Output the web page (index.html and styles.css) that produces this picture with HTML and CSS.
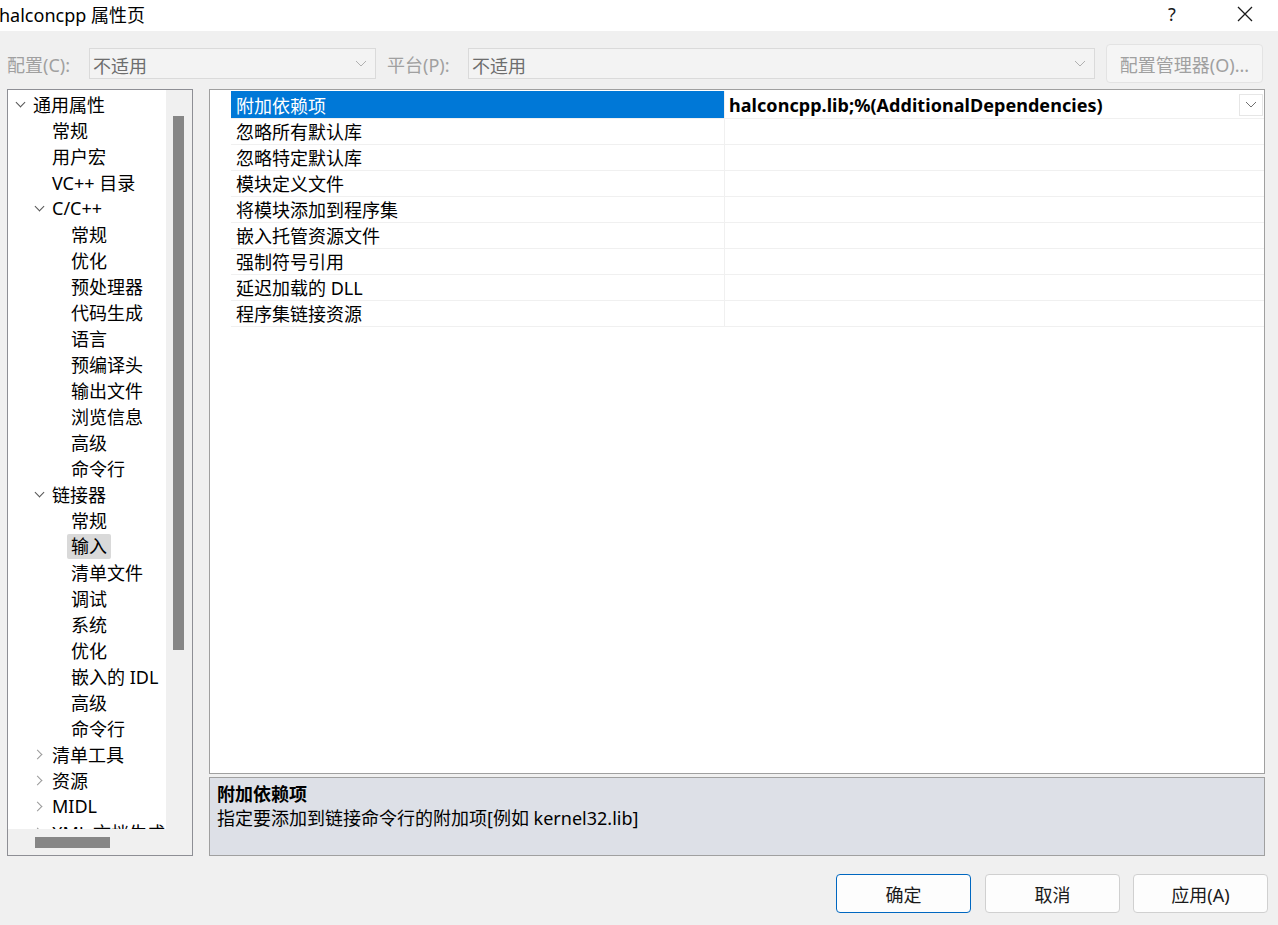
FILE: index.html
```html
<!DOCTYPE html>
<html lang="zh-CN">
<head>
  <meta charset="UTF-8" />
  <title>halconcpp 属性页</title>
  <link rel="stylesheet" href="styles.css">
</head>
<body>
  <div class="dialog">
    <div class="titlebar">
      <span class="title">halconcpp 属性页</span>
      <span class="help">?</span>
      <span class="close">
        <svg width="16" height="16" viewBox="0 0 16 16"><path d="M1 1 L15 15 M15 1 L1 15" stroke="#1a1a1a" stroke-width="1.3" fill="none"/></svg>
      </span>
    </div>

    <div class="config-row">
      <label class="config-label">配置(C):</label>
      <div class="combo combo-config">
        <span>不适用</span>
        <svg class="combo-arrow" width="12" height="7" viewBox="0 0 12 7"><path d="M1 1 L6 6 L11 1" stroke="#b0b0b0" fill="none"/></svg>
      </div>
      <label class="config-label platform-label">平台(P):</label>
      <div class="combo combo-platform">
        <span>不适用</span>
        <svg class="combo-arrow" width="12" height="7" viewBox="0 0 12 7"><path d="M1 1 L6 6 L11 1" stroke="#b0b0b0" fill="none"/></svg>
      </div>
      <button class="manager-button" disabled>配置管理器(O)...</button>
    </div>

    <div class="main">
      <div class="tree-panel">
        <div class="tree">
          <div class="node lvl0"><span class="twisty open"></span>通用属性</div>
          <div class="node lvl1"><span class="twisty"></span>常规</div>
          <div class="node lvl1"><span class="twisty"></span>用户宏</div>
          <div class="node lvl1"><span class="twisty"></span>VC++ 目录</div>
          <div class="node lvl1"><span class="twisty open"></span>C/C++</div>
          <div class="node lvl2"><span class="twisty"></span>常规</div>
          <div class="node lvl2"><span class="twisty"></span>优化</div>
          <div class="node lvl2"><span class="twisty"></span>预处理器</div>
          <div class="node lvl2"><span class="twisty"></span>代码生成</div>
          <div class="node lvl2"><span class="twisty"></span>语言</div>
          <div class="node lvl2"><span class="twisty"></span>预编译头</div>
          <div class="node lvl2"><span class="twisty"></span>输出文件</div>
          <div class="node lvl2"><span class="twisty"></span>浏览信息</div>
          <div class="node lvl2"><span class="twisty"></span>高级</div>
          <div class="node lvl2"><span class="twisty"></span>命令行</div>
          <div class="node lvl1"><span class="twisty open"></span>链接器</div>
          <div class="node lvl2"><span class="twisty"></span>常规</div>
          <div class="node lvl2"><span class="twisty"></span><span class="selected">输入</span></div>
          <div class="node lvl2"><span class="twisty"></span>清单文件</div>
          <div class="node lvl2"><span class="twisty"></span>调试</div>
          <div class="node lvl2"><span class="twisty"></span>系统</div>
          <div class="node lvl2"><span class="twisty"></span>优化</div>
          <div class="node lvl2"><span class="twisty"></span>嵌入的 IDL</div>
          <div class="node lvl2"><span class="twisty"></span>高级</div>
          <div class="node lvl2"><span class="twisty"></span>命令行</div>
          <div class="node lvl1"><span class="twisty closed"></span>清单工具</div>
          <div class="node lvl1"><span class="twisty closed"></span>资源</div>
          <div class="node lvl1"><span class="twisty closed"></span>MIDL</div>
          <div class="node lvl1"><span class="twisty closed"></span>XML 文档生成器</div>
        </div>
        <div class="vscroll"><div class="vthumb"></div></div>
        <div class="hscroll"><div class="hthumb"></div></div>
        <div class="scroll-corner"></div>
      </div>

      <div class="right-column">
        <div class="grid">
          <div class="row">
            <div class="gutter"></div>
            <div class="name active">附加依赖项</div>
            <div class="value">
              <b>halconcpp.lib;%(AdditionalDependencies)</b>
              <span class="drop">
                <svg width="12" height="7" viewBox="0 0 12 7"><path d="M1 1 L6 6 L11 1" stroke="#707070" fill="none"/></svg>
              </span>
            </div>
          </div>
          <div class="row"><div class="gutter"></div><div class="name">忽略所有默认库</div><div class="value"></div></div>
          <div class="row"><div class="gutter"></div><div class="name">忽略特定默认库</div><div class="value"></div></div>
          <div class="row"><div class="gutter"></div><div class="name">模块定义文件</div><div class="value"></div></div>
          <div class="row"><div class="gutter"></div><div class="name">将模块添加到程序集</div><div class="value"></div></div>
          <div class="row"><div class="gutter"></div><div class="name">嵌入托管资源文件</div><div class="value"></div></div>
          <div class="row"><div class="gutter"></div><div class="name">强制符号引用</div><div class="value"></div></div>
          <div class="row"><div class="gutter"></div><div class="name">延迟加载的 DLL</div><div class="value"></div></div>
          <div class="row"><div class="gutter"></div><div class="name">程序集链接资源</div><div class="value"></div></div>
        </div>
        <div class="description">
          <div class="desc-title">附加依赖项</div>
          <div class="desc-text">指定要添加到链接命令行的附加项[例如 kernel32.lib]</div>
        </div>
      </div>
    </div>

    <div class="footer">
      <button class="btn btn-default">确定</button>
      <button class="btn">取消</button>
      <button class="btn">应用(A)</button>
    </div>
  </div>
</body>
</html>
```

FILE: styles.css
```css
body {
  margin: 0;
  font-family: "Noto Sans", "Noto Sans CJK SC", sans-serif;
  font-size: 18px;
  color: #000;
  background-color: #f0f0f0;
}
.dialog {
  width: 1278px;
  height: 925px;
  background-color: #f0f0f0;
  overflow: hidden;
}
.titlebar {
  height: 31px;
  background-color: #fff;
  display: flex;
  align-items: center;
  font-size: 18px;
}
.title {
  flex: 1;
  margin-left: -1px;
  margin-top: -4px;
}
.help {
  width: 20px;
  margin-top: -4px;
  color: #1a1a1a;
}
.close {
  width: 16px;
  margin: -4px 25px 0 49px;
  display: flex;
}
.config-row {
  display: flex;
  align-items: center;
  height: 39px;
  margin-top: 13px;
  padding-left: 7px;
}
.config-label {
  color: #a0a0a0;
  width: 82px;
}
.platform-label {
  width: 81px;
  margin-left: 11px;
}
.combo {
  height: 31px;
  border: 1px solid #dadada;
  background-color: #f3f3f3;
  display: flex;
  align-items: center;
  justify-content: space-between;
  padding: 0 8px 0 3px;
  color: #6d6d6d;
  box-sizing: border-box;
}
.combo span {
  margin-top: 3px;
}
.combo-config {
  width: 287px;
}
.combo-platform {
  width: 627px;
}
.manager-button {
  margin-left: 11px;
  width: 157px;
  height: 39px;
  font-family: inherit;
  font-size: 18px;
  color: #a0a0a0;
  background-color: #f5f5f5;
  border: 1px solid #e3e3e3;
  border-radius: 4px;
  padding: 0;
}
.main {
  display: flex;
  margin-top: 6px;
  padding-left: 7px;
  height: 767px;
}
.tree-panel {
  width: 186px;
  border: 1px solid #8e8f95;
  box-sizing: border-box;
  display: grid;
  grid-template-columns: 158px 26px;
  grid-template-rows: 739px 26px;
  background-color: #fff;
}
.tree {
  overflow: hidden;
  padding-top: 1px;
}
.node {
  height: 26px;
  display: flex;
  align-items: center;
  white-space: nowrap;
}
.lvl0 { padding-left: 0; }
.lvl1 { padding-left: 19px; }
.lvl2 { padding-left: 38px; }
.twisty {
  width: 25px;
  height: 26px;
  flex: none;
  position: relative;
}
.twisty.open::before,
.twisty.closed::before {
  content: "";
  position: absolute;
  width: 6px;
  height: 6px;
  border-right: 1.2px solid #555;
  border-bottom: 1.2px solid #555;
}
.twisty.open::before {
  left: 9px;
  top: 8px;
  transform: rotate(45deg);
}
.twisty.closed::before {
  left: 7px;
  top: 10px;
  transform: rotate(-45deg);
  border-color: #9a9a9a;
}
.selected {
  background-color: #d9d9d9;
  margin-left: -4px;
  padding: 0 4px;
  line-height: 25px;
  border-radius: 2px;
}
.vscroll {
  background-color: #f0f0f0;
  padding: 26px 0 0 7px;
}
.vthumb {
  width: 11px;
  height: 534px;
  background-color: #868686;
}
.hscroll {
  background-color: #f0f0f0;
  padding: 8px 0 0 27px;
}
.hthumb {
  width: 75px;
  height: 11px;
  background-color: #868686;
}
.scroll-corner {
  background-color: #f0f0f0;
}
.right-column {
  margin-left: 16px;
  width: 1056px;
  display: flex;
  flex-direction: column;
}
.grid {
  height: 686px;
  border: 1px solid #a0a0a0;
  box-sizing: border-box;
  background-color: #fff;
  padding-top: 1px;
}
.row {
  display: grid;
  grid-template-columns: 21px 493px 1fr;
  height: 26px;
}
.name,
.value {
  border-bottom: 1px solid #f0f0f0;
  display: flex;
  align-items: center;
  white-space: nowrap;
  padding-top: 1px;
}
.name {
  padding-left: 5px;
}
.name.active {
  background-color: #0078d7;
  color: #fff;
}
.value {
  border-left: 1px solid #f0f0f0;
  padding-left: 4px;
  justify-content: space-between;
}
.value b {
  font-weight: 700;
  font-size: 18px;
  letter-spacing: 0.05px;
}
.drop {
  width: 24px;
  height: 22px;
  margin: -1px 1px 0 0;
  border: 1px solid #e6e6e6;
  box-sizing: border-box;
  display: flex;
  align-items: center;
  justify-content: center;
}
.description {
  margin-top: 3px;
  height: 79px;
  border: 1px solid #a0a0a0;
  box-sizing: border-box;
  background-color: #dde0e7;
  padding: 4px 7px;
  line-height: 24px;
}
.desc-title {
  font-weight: 700;
}
.footer {
  display: flex;
  justify-content: flex-end;
  gap: 13px;
  padding: 18px 10px 0 0;
}
.btn {
  width: 135px;
  height: 39px;
  font-family: inherit;
  font-size: 18px;
  color: #1a1a1a;
  background-color: #fdfdfd;
  border: 1px solid #d0d0d0;
  border-radius: 4px;
  padding: 0;
}
.btn-default {
  border-color: #0067c0;
  margin-right: 1px;
}
```
